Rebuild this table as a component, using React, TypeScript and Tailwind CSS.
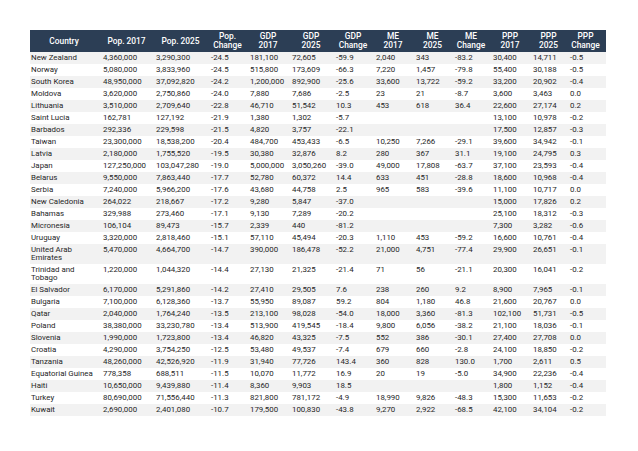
import React from "react";

const headers: string[][] = [
  ["Country"],
  ["Pop. 2017"],
  ["Pop. 2025"],
  ["Pop.", "Change"],
  ["GDP", "2017"],
  ["GDP", "2025"],
  ["GDP", "Change"],
  ["ME", "2017"],
  ["ME", "2025"],
  ["ME", "Change"],
  ["PPP", "2017"],
  ["PPP", "2025"],
  ["PPP", "Change"],
];

const widths = [
  "w-[72px]",
  "w-[53px]",
  "w-[55px]",
  "w-[39px]",
  "w-[42px]",
  "w-[44px]",
  "w-[40px]",
  "w-[40px]",
  "w-[39px]",
  "w-[38px]",
  "w-[40px]",
  "w-[37px]",
  "w-[37px]",
];

const rows: string[][] = [
  ["New Zealand", "4,360,000", "3,290,300", "-24.5", "181,100", "72,605", "-59.9", "2,040", "343", "-83.2", "30,400", "14,711", "-0.5"],
  ["Norway", "5,080,000", "3,833,960", "-24.5", "515,800", "173,609", "-66.3", "7,220", "1,457", "-79.8", "55,400", "30,188", "-0.5"],
  ["South Korea", "48,950,000", "37,092,820", "-24.2", "1,200,000", "892,900", "-25.6", "33,600", "13,722", "-59.2", "33,200", "20,902", "-0.4"],
  ["Moldova", "3,620,000", "2,750,860", "-24.0", "7,880", "7,686", "-2.5", "23", "21", "-8.7", "3,600", "3,463", "0.0"],
  ["Lithuania", "3,510,000", "2,709,640", "-22.8", "46,710", "51,542", "10.3", "453", "618", "36.4", "22,600", "27,174", "0.2"],
  ["Saint Lucia", "162,781", "127,192", "-21.9", "1,380", "1,302", "-5.7", "", "", "", "13,100", "10,978", "-0.2"],
  ["Barbados", "292,336", "229,598", "-21.5", "4,820", "3,757", "-22.1", "", "", "", "17,500", "12,857", "-0.3"],
  ["Taiwan", "23,300,000", "18,538,200", "-20.4", "484,700", "453,433", "-6.5", "10,250", "7,266", "-29.1", "39,600", "34,942", "-0.1"],
  ["Latvia", "2,180,000", "1,755,520", "-19.5", "30,380", "32,876", "8.2", "280", "367", "31.1", "19,100", "24,795", "0.3"],
  ["Japan", "127,250,000", "103,047,280", "-19.0", "5,000,000", "3,050,260", "-39.0", "49,000", "17,808", "-63.7", "37,100", "23,593", "-0.4"],
  ["Belarus", "9,550,000", "7,863,440", "-17.7", "52,780", "60,372", "14.4", "633", "451", "-28.8", "18,600", "10,968", "-0.4"],
  ["Serbia", "7,240,000", "5,966,200", "-17.6", "43,680", "44,758", "2.5", "965", "583", "-39.6", "11,100", "10,717", "0.0"],
  ["New Caledonia", "264,022", "218,667", "-17.2", "9,280", "5,847", "-37.0", "", "", "", "15,000", "17,826", "0.2"],
  ["Bahamas", "329,988", "273,460", "-17.1", "9,130", "7,289", "-20.2", "", "", "", "25,100", "18,312", "-0.3"],
  ["Micronesia", "106,104", "89,473", "-15.7", "2,339", "440", "-81.2", "", "", "", "7,300", "3,282", "-0.6"],
  ["Uruguay", "3,320,000", "2,818,460", "-15.1", "57,110", "45,494", "-20.3", "1,110", "453", "-59.2", "16,600", "10,761", "-0.4"],
  ["United Arab Emirates", "5,470,000", "4,664,700", "-14.7", "390,000", "186,478", "-52.2", "21,000", "4,751", "-77.4", "29,900", "26,651", "-0.1"],
  ["Trinidad and Tobago", "1,220,000", "1,044,320", "-14.4", "27,130", "21,325", "-21.4", "71", "56", "-21.1", "20,300", "16,041", "-0.2"],
  ["El Salvador", "6,170,000", "5,291,860", "-14.2", "27,410", "29,505", "7.6", "238", "260", "9.2", "8,900", "7,965", "-0.1"],
  ["Bulgaria", "7,100,000", "6,128,360", "-13.7", "55,950", "89,087", "59.2", "804", "1,180", "46.8", "21,600", "20,767", "0.0"],
  ["Qatar", "2,040,000", "1,764,240", "-13.5", "213,100", "98,028", "-54.0", "18,000", "3,360", "-81.3", "102,100", "51,731", "-0.5"],
  ["Poland", "38,380,000", "33,230,780", "-13.4", "513,900", "419,545", "-18.4", "9,800", "6,056", "-38.2", "21,100", "18,036", "-0.1"],
  ["Slovenia", "1,990,000", "1,723,800", "-13.4", "46,820", "43,325", "-7.5", "552", "386", "-30.1", "27,400", "27,708", "0.0"],
  ["Croatia", "4,290,000", "3,754,250", "-12.5", "53,480", "49,537", "-7.4", "679", "660", "-2.8", "24,100", "18,850", "-0.2"],
  ["Tanzania", "48,260,000", "42,526,920", "-11.9", "31,940", "77,726", "143.4", "360", "828", "130.0", "1,700", "2,611", "0.5"],
  ["Equatorial Guinea", "778,358", "688,511", "-11.5", "10,070", "11,772", "16.9", "20", "19", "-5.0", "34,900", "22,236", "-0.4"],
  ["Haiti", "10,650,000", "9,439,880", "-11.4", "8,360", "9,903", "18.5", "", "", "", "1,800", "1,152", "-0.4"],
  ["Turkey", "80,690,000", "71,556,440", "-11.3", "821,800", "781,172", "-4.9", "18,990", "9,826", "-48.3", "15,300", "11,653", "-0.2"],
  ["Kuwait", "2,690,000", "2,401,080", "-10.7", "179,500", "100,830", "-43.8", "9,270", "2,922", "-68.5", "42,100", "34,104", "-0.2"],
];

export default function App() {
  return (
    <div
      className="w-[638px] h-[451px] bg-white pt-[30px] pl-[30px]"
      style={{ fontFamily: "Roboto, 'Liberation Sans', sans-serif" }}
    >
      <table className="table-fixed border-collapse w-[576px]">
        <colgroup>
          {widths.map((w, i) => (
            <col key={i} className={w} />
          ))}
        </colgroup>
        <thead>
          <tr className="bg-[#2c3e55]">
            {headers.map((h, i) => (
              <th
                key={i}
                className="h-[22px] pl-[1px] pr-[5px] py-[2px] text-center align-middle text-white font-medium text-[8.4px] leading-[9px]"
              >
                {h.map((line, li) => (
                  <div key={li}>{line}</div>
                ))}
              </th>
            ))}
          </tr>
        </thead>
        <tbody>
          {rows.map((r, ri) => (
            <tr key={ri} className={ri % 2 === 0 ? "bg-[#f2f2f2]" : "bg-white"}>
              {r.map((c, ci) => (
                <td
                  key={ci}
                  className="pl-[1px] pr-[2px] py-[2px] text-left align-top text-[#262626] text-[7.9px] leading-[8px]"
                >
                  {c}
                </td>
              ))}
            </tr>
          ))}
        </tbody>
      </table>
    </div>
  );
}
